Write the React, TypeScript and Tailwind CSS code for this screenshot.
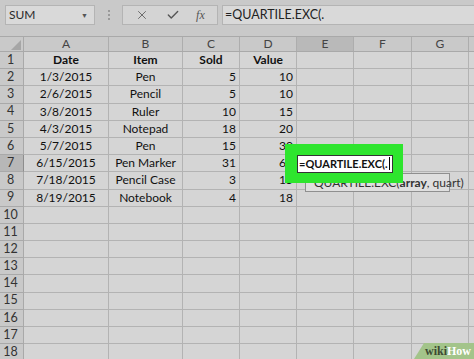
import { X, Check } from "lucide-react";

const cols = [
  { key: "A", w: "w-[85px]" },
  { key: "B", w: "w-[74px]" },
  { key: "C", w: "w-[57px]" },
  { key: "D", w: "w-[57px]" },
  { key: "E", w: "w-[57px]" },
  { key: "F", w: "w-[58px]" },
  { key: "G", w: "w-[57px]" },
];

type Row = { date: string; item: string; sold: string; value: string; bold?: boolean };

const rows: Row[] = [
  { date: "Date", item: "Item", sold: "Sold", value: "Value", bold: true },
  { date: "1/3/2015", item: "Pen", sold: "5", value: "10" },
  { date: "2/6/2015", item: "Pencil", sold: "5", value: "10" },
  { date: "3/8/2015", item: "Ruler", sold: "10", value: "15" },
  { date: "4/3/2015", item: "Notepad", sold: "18", value: "20" },
  { date: "5/7/2015", item: "Pen", sold: "15", value: "30" },
  { date: "6/15/2015", item: "Pen Marker", sold: "31", value: "60" },
  { date: "7/18/2015", item: "Pencil Case", sold: "3", value: "15" },
  { date: "8/19/2015", item: "Notebook", sold: "4", value: "18" },
];

const TOTAL_ROWS = 18;

const FormulaBar = () => (
  <div className="flex h-[36px] items-start bg-[#c9c9c9] pt-[5px] pl-[5px]">
    <div className="flex h-[20px] w-[90px] items-center justify-between border border-[#b4b4b4] bg-[#d9d9d9] pl-[3px] pr-[6px]">
      <span className="text-[12px] text-[#2a2a2a]">SUM</span>
      <span className="text-[7px] text-[#555]">▼</span>
    </div>
    <div className="flex h-[20px] w-[27px] flex-col items-center justify-center gap-[2px]">
      <span className="h-[2px] w-[2px] rounded-full bg-[#8a8a8a]" />
      <span className="h-[2px] w-[2px] rounded-full bg-[#8a8a8a]" />
      <span className="h-[2px] w-[2px] rounded-full bg-[#8a8a8a]" />
    </div>
    <div className="flex h-[20px] w-[96px] items-center justify-around border border-[#b4b4b4] bg-[#d4d4d4] px-[4px]">
      <X size={14} strokeWidth={1.4} className="text-[#555]" />
      <Check size={14} strokeWidth={2.4} className="text-[#555]" />
      <span className="text-[12px] italic text-[#555] [font-family:'Liberation_Serif',serif]">fx</span>
    </div>
    <div className="ml-[4px] flex h-[20px] flex-1 items-center border border-r-0 border-[#b4b4b4] bg-[#d9d9d9] pl-[2px]">
      <span className="text-[12.5px] text-[#222]">=QUARTILE.EXC(.</span>
    </div>
  </div>
);

const HeaderRow = () => (
  <div className="flex h-[16px] border-t border-b border-[#a9a9a9] bg-[#c9c9c9]">
    <div className="relative w-[24px] shrink-0 border-r border-[#a9a9a9]">
      <div className="absolute right-[2px] bottom-[1px] h-0 w-0 border-b-[10px] border-l-[10px] border-b-[#a6a6a6] border-l-transparent" />
    </div>
    {cols.map((c) => (
      <div
        key={c.key}
        className={`${c.w} flex shrink-0 items-center justify-center border-r border-[#adadad] text-[12px] leading-none text-[#444] ${
          c.key === "E" ? "bg-[#b9b9b9]" : ""
        }`}
      >
        {c.key}
      </div>
    ))}
    <div className="flex-1" />
  </div>
);

const DataRow = ({ n, row }: { n: number; row?: Row }) => {
  const cell = "shrink-0 border-r border-b border-[#b3b3b3] flex items-center leading-none whitespace-nowrap";
  const weight = row?.bold ? "font-bold" : "";
  return (
    <div className="flex h-[17.2px] text-[12px] text-[#111]">
      <div
        className={`flex w-[24px] shrink-0 items-center justify-center border-r border-b border-[#a9a9a9] pr-[2px] text-[12.5px] leading-none text-[#333] ${
          n === 7 ? "bg-[#b7b7b7] border-r-[#8d8d8d]" : "bg-[#c9c9c9]"
        }`}
      >
        {n}
      </div>
      <div className={`${cell} w-[85px] justify-center ${weight}`}>{row?.date}</div>
      <div className={`${cell} w-[74px] justify-center ${weight}`}>{row?.item}</div>
      <div className={`${cell} w-[57px] ${row?.bold ? "justify-center" : "justify-end pr-[3px]"} ${weight}`}>
        {row?.sold}
      </div>
      <div className={`${cell} w-[57px] ${row?.bold ? "justify-center" : "justify-end pr-[3px]"} ${weight}`}>
        {row?.value}
      </div>
      <div className={`${cell} w-[57px]`} />
      <div className={`${cell} w-[58px]`} />
      <div className={`${cell} w-[57px]`} />
      <div className="flex-1 border-b border-[#b3b3b3]" />
    </div>
  );
};

export default function App() {
  const nums = Array.from({ length: TOTAL_ROWS }, (_, i) => i + 1);
  return (
    <div className="relative h-[359px] w-[474px] overflow-hidden bg-[#d5d5d5] [font-family:Lato,'Open_Sans',sans-serif]">
      <FormulaBar />
      <HeaderRow />
      <div className="flex flex-col">
        {nums.map((n) => (
          <DataRow key={n} n={n} row={rows[n - 1]} />
        ))}
      </div>

      {/* function hint tooltip */}
      <div className="absolute left-[305px] top-[173px] flex h-[19px] w-[145px] items-center whitespace-nowrap border border-[#8f8f8f] bg-[#dfdfdf] pl-[8px] text-[12px] leading-none text-[#333]">
        <span>
          QUARTILE.EXC(<b>array</b>, quart)
        </span>
      </div>

      {/* highlighted edit cell */}
      <div className="absolute left-[285px] top-[144px] flex h-[39px] w-[118px] items-center bg-[#2ee52e] pl-[12px]">
        <div className="flex h-[18px] w-[96px] items-center whitespace-nowrap border border-[#333] bg-white pl-[1px] text-[11px] font-bold leading-none text-[#111]">
          =QUARTILE.EXC(.
          <span className="ml-[1px] h-[13px] w-px bg-black" />
        </div>
      </div>

      {/* watermark */}
      <div className="absolute bottom-0 right-0 flex h-[16px] w-[60px] items-center justify-end bg-[#a3c48a] pr-[3px] text-[12px] font-bold leading-none [clip-path:polygon(10px_0,100%_0,100%_100%,0_100%)] [font-family:'Liberation_Serif',serif]">
        <span className="text-[#3c4a32]">wiki</span>
        <span className="text-white">How</span>
      </div>
    </div>
  );
}
